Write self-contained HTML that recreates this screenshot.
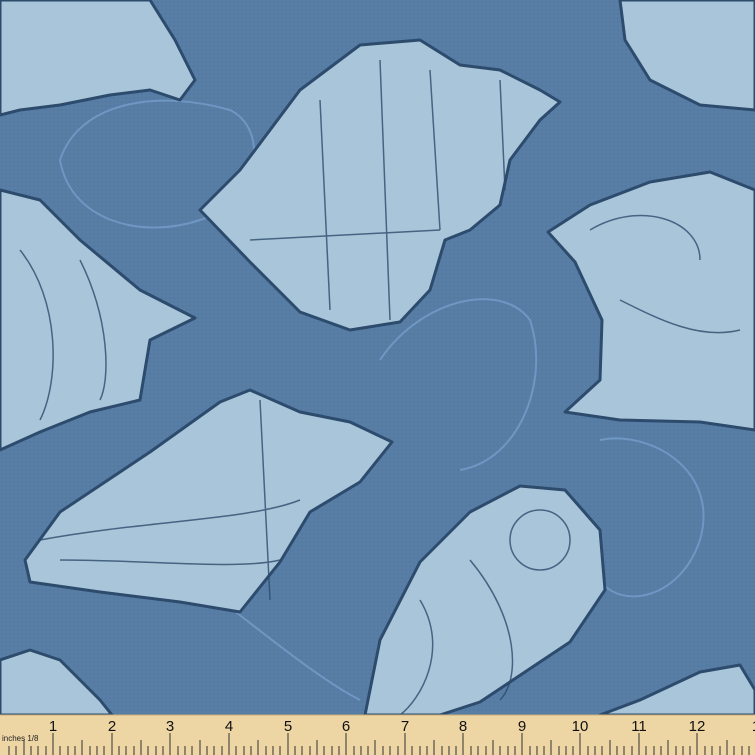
<!DOCTYPE html>
<html><head><style>
html,body{margin:0;padding:0;width:755px;height:755px;overflow:hidden;background:#5a7fa6}
svg{display:block}
text{font-family:"Liberation Sans",sans-serif}
</style></head><body>
<svg width="755" height="755" viewBox="0 0 755 755" xmlns="http://www.w3.org/2000/svg">
<defs>
<pattern id="dots" width="4" height="4" patternUnits="userSpaceOnUse"><circle cx="2" cy="2" r="0.8" fill="#4a6f96" opacity="0.6"/></pattern>
</defs>
<rect width="755" height="755" fill="#587ea6"/>
<rect width="755" height="755" fill="url(#dots)"/>
<g fill="none" stroke="#7aa3d0" stroke-width="2" opacity="0.7">
<path d="M60 160 C80 100 160 90 230 110 C270 130 260 200 200 220 C140 240 70 220 60 160Z"/>
<path d="M380 360 C420 300 500 280 530 320 C550 380 520 460 460 470"/>
<path d="M600 440 C650 430 720 470 700 540 C680 600 620 610 600 580"/>
<path d="M220 600 C260 630 320 680 360 700"/>
</g>
<g fill="#a9c5d9" stroke="#2d4b6d" stroke-width="3" stroke-linejoin="round">
<path d="M0 0 L150 0 L175 40 L195 80 L180 100 L150 90 L110 95 L60 105 L20 110 L0 115Z"/>
<path d="M200 210 L240 170 L300 90 L360 45 L420 40 L460 65 L500 70 L540 90 L560 102 L540 120 L510 160 L500 205 L470 230 L445 240 L430 290 L400 322 L350 330 L300 312 L250 262 Z"/>
<path d="M620 0 L755 0 L755 110 L700 105 L650 80 L625 40Z"/>
<path d="M548 232 L590 205 L650 182 L710 172 L755 190 L755 430 L700 422 L620 420 L565 412 L600 380 L602 320 L575 262 Z"/>
<path d="M0 190 L40 200 L80 240 L140 290 L195 318 L150 340 L140 400 L90 412 L40 432 L0 450Z"/>
<path d="M25 560 L60 512 L150 452 L220 402 L250 390 L300 412 L350 422 L392 442 L360 482 L310 512 L280 562 L240 612 L180 602 L100 592 L30 582Z"/>
<path d="M365 715 L380 640 L420 562 L470 512 L520 486 L565 490 L600 530 L605 590 L570 642 L480 702 L440 715Z"/>
<path d="M0 660 L30 650 L60 660 L100 700 L112 715 L0 715Z"/>
<path d="M600 715 L640 700 L700 672 L740 665 L755 690 L755 715Z"/>
</g>
<g fill="none" stroke="#2d4b6d" stroke-width="1.5" opacity="0.8">
<path d="M430 70 L440 230"/><path d="M500 80 L505 190"/><path d="M250 240 L440 230"/>
<path d="M320 100 L330 310"/><path d="M380 60 L390 320"/>
<path d="M590 230 C640 200 700 220 700 260"/><path d="M620 300 C660 320 700 340 740 330"/>
<path d="M40 540 C150 520 250 520 300 500"/><path d="M260 400 L270 600"/><path d="M60 560 C150 560 240 570 280 560"/>
<path d="M540 540 m-30 0 a30 30 0 1 0 60 0 a30 30 0 1 0 -60 0"/><path d="M420 600 C450 650 420 700 400 715"/><path d="M470 560 C520 620 520 680 500 700"/>
<path d="M20 250 C60 300 60 380 40 420"/><path d="M80 260 C110 320 110 380 100 400"/>
</g>
<rect x="0" y="715" width="755" height="40" fill="#edd5a4"/>
<line x1="0" y1="715" x2="755" y2="715" stroke="#c9ae7a" stroke-width="1"/>
<text x="2" y="741" font-size="8" fill="#222">inches 1/8</text>
<g font-size="15" fill="#111" text-anchor="middle">
<text x="53" y="731">1</text><text x="112" y="731">2</text><text x="170" y="731">3</text><text x="229" y="731">4</text><text x="288" y="731">5</text><text x="346" y="731">6</text><text x="405" y="731">7</text><text x="463" y="731">8</text><text x="522" y="731">9</text><text x="580" y="731">10</text><text x="639" y="731">11</text><text x="697" y="731">12</text><text x="756" y="731">1</text>
</g>
<g stroke="#333" stroke-width="1">
<path d="M53 733V755M112 733V755M170 733V755M229 733V755M288 733V755M346 733V755M405 733V755M463 733V755M522 733V755M580 733V755M639 733V755M697 733V755M24 740V755M82 740V755M141 740V755M200 740V755M258 740V755M317 740V755M375 740V755M434 740V755M493 740V755M551 740V755M610 740V755M668 740V755M727 740V755"/>
<path d="M9 746V755M16 746V755M31 746V755M38 746V755M46 746V755M60 746V755M68 746V755M75 746V755M90 746V755M97 746V755M104 746V755M119 746V755M126 746V755M134 746V755M148 746V755M156 746V755M163 746V755M178 746V755M185 746V755M192 746V755M207 746V755M214 746V755M222 746V755M236 746V755M244 746V755M251 746V755M266 746V755M273 746V755M280 746V755M295 746V755M302 746V755M310 746V755M324 746V755M332 746V755M339 746V755M354 746V755M361 746V755M368 746V755M383 746V755M390 746V755M398 746V755M412 746V755M420 746V755M427 746V755M442 746V755M449 746V755M456 746V755M471 746V755M478 746V755M486 746V755M500 746V755M508 746V755M515 746V755M530 746V755M537 746V755M544 746V755M559 746V755M566 746V755M573 746V755M588 746V755M595 746V755M602 746V755M617 746V755M624 746V755M632 746V755M646 746V755M654 746V755M661 746V755M676 746V755M683 746V755M690 746V755M705 746V755M712 746V755M720 746V755M734 746V755M742 746V755M749 746V755"/>
</g>
</svg>
</body></html>
